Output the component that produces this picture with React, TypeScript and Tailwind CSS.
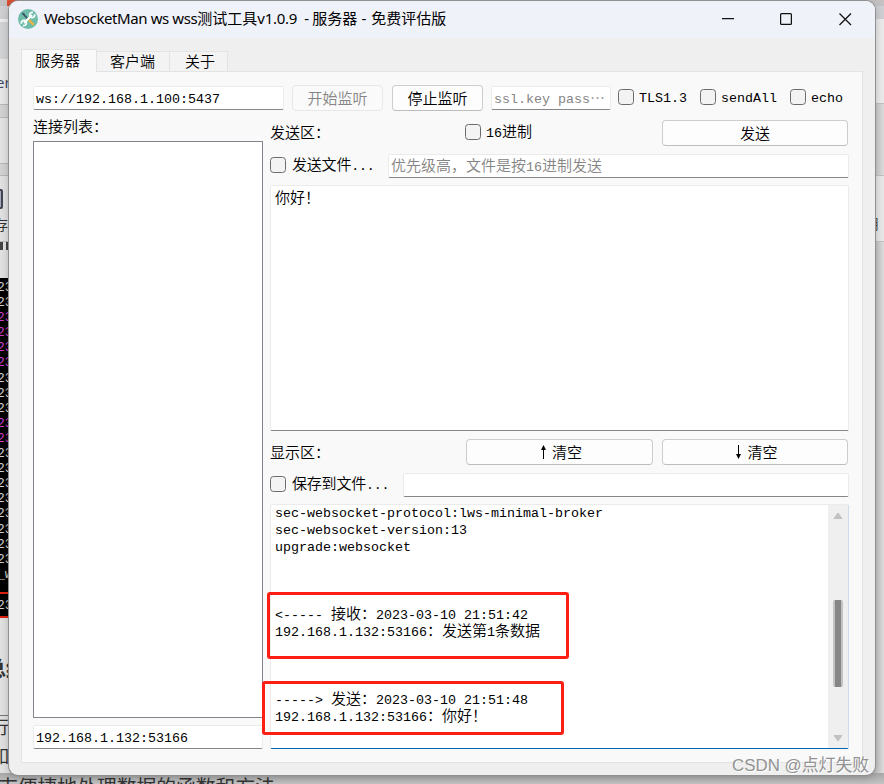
import React from "react";

const LATIN = /([\x20-\x7e]+)/;

function Mono({ text, className = "" }: { text: string; className?: string }) {
  return (
    <span className={`whitespace-pre font-['Noto_Sans_CJK_SC',sans-serif] text-[15px] font-[350] ${className}`}>
      {text.split(LATIN).map((part, i) =>
        LATIN.test(part) ? (
          <span key={i} className="font-['Liberation_Mono',monospace] text-[13.34px]">{part}</span>
        ) : (
          part
        ),
      )}
    </span>
  );
}

function Check({ label, className = "" }: { label: string; className?: string }) {
  return (
    <label className={`flex h-4 items-center gap-[5px] ${className}`}>
      <span className="size-4 shrink-0 rounded-[3.5px] border border-[#6b6b6b] bg-[#f3f3f3]" />
      <Mono text={label} className="leading-4" />
    </label>
  );
}

function Field({ text = "", className = "", muted = false, clipped = false }: { text?: string; className?: string; muted?: boolean; clipped?: boolean }) {
  return (
    <div
      className={`flex h-6 items-center overflow-hidden rounded-[2px] border border-[#ebebeb] border-b-[#868686] bg-white pl-[2px] pt-[1px] ${muted ? "text-[#858585]" : "text-black"} ${className}`}
    >
      <Mono text={text} className="leading-5" />
      {clipped && <Mono text="…" className="-mt-px leading-5" />}
    </div>
  );
}

function Btn({ text, className = "", disabled = false }: { text: string; className?: string; disabled?: boolean }) {
  return (
    <button
      className={`flex h-[26px] shrink-0 items-center justify-center rounded-[4px] border ${disabled ? "border-[#e8e8e8] bg-[#fafafa] text-[#858585]" : "border-[#cdcdcd] border-b-[#bdbdbd] bg-[#fdfdfd] text-black"} ${className}`}
    >
      <Mono text={text} className="leading-5" />
    </button>
  );
}

function Arrow({ down = false }: { down?: boolean }) {
  return (
    <svg width="7" height="14" viewBox="0 0 7 14" className={down ? "rotate-180" : ""}>
      <path d="M3.5 14V2" stroke="#000" fill="none" />
      <path d="M3.5 0L6 5H1Z" fill="#000" />
    </svg>
  );
}

function ClearBtn({ down = false, className = "" }: { down?: boolean; className?: string }) {
  return (
    <button className={`flex h-[26px] items-center justify-center gap-[5px] rounded-[4px] border border-[#cdcdcd] border-b-[#bdbdbd] bg-[#fdfdfd] pl-[3px] ${className}`}>
      <Arrow down={down} />
      <Mono text="清空" className="leading-5" />
    </button>
  );
}

const log = [
  "sec-websocket-protocol:lws-minimal-broker",
  "sec-websocket-version:13",
  "upgrade:websocket",
  "",
  "",
  "",
  "<----- 接收：2023-03-10 21:51:42",
  "192.168.1.132:53166：发送第1条数据",
  "",
  "",
  "",
  "-----> 发送：2023-03-10 21:51:48",
  "192.168.1.132:53166：你好！",
];

const terminal = ["w", "w", "p", "p", "p", "p", "w", "w", "w", "p", "p", "w", "w", "w", "w", "w", "w", "w", "w"];

function Desktop() {
  return (
    <>
      <div className="absolute inset-y-0 left-0 flex w-[10px] flex-col overflow-hidden bg-[#e2e2e2] font-['Noto_Sans_CJK_SC',sans-serif] text-[#333]">
        <div className="h-[19px] shrink-0 bg-[#d0d0d2]" />
        <div className="h-[3px] shrink-0 bg-[#ededed]" />
        <div className="h-[37px] shrink-0 bg-[#d3d4d6]" />
        <div className="h-[45px] shrink-0 bg-[#e8e8e8] pt-[13px] font-['Open_Sans',sans-serif] text-[15px] leading-5">
          <span className="-ml-[4px] text-[#3b4660]">er</span>
        </div>
        <div className="h-[14px] shrink-0 border-y border-[#b9b9b9] bg-[#d3d3d3]" />
        <div className="h-[45px] shrink-0 bg-[#e4e4e4]" />
        <div className="h-[13px] shrink-0 border-y border-[#b9b9b9] bg-[#d3d3d3]" />
        <div className="h-[66px] shrink-0 border-b border-[#bbb] pt-[13px]">
          <div className="-ml-1 h-5 w-[7px] rounded-[2px] border-2 border-[#454559] bg-[#a9abb5]" />
          <div className="-ml-[6px] mt-[7px] w-[15px] text-[14px] leading-4">存</div>
        </div>
        <div className="flex h-[36px] shrink-0 gap-[3px]">
          <div className="h-2 w-[3px] bg-[#444]" />
          <div className="h-2 w-[4px] bg-[#444]" />
        </div>
        <div className="h-[340px] shrink-0 bg-black pt-[2px] font-['Liberation_Mono',monospace] text-[13px] leading-[15.1px] text-[#d4d4d4]">
          {terminal.map((tone, i) => (
            <div key={i} className={`-ml-[3px] ${tone === "p" ? "text-[#cc3fcf]" : "text-[#d4d4d4]"}`}>
              23
            </div>
          ))}
          <div className="-ml-[3px] leading-[15px]">_w</div>
        </div>
        <div className="h-[98px] shrink-0 border-b border-[#777] pt-[34px]">
          <div className="-ml-[15px] w-[48px] text-[21px] font-bold leading-[30px]">总结</div>
        </div>
        <div className="-ml-[9px] w-[40px] text-[18px] leading-[20px]">行</div>
        <div className="-ml-[9px] mt-[8px] w-[40px] text-[18px] leading-[22px]">如</div>
      </div>

      <div className="absolute left-0 top-[592px] h-[26px] w-[9px] overflow-hidden border-y-2 border-[#e0200f] bg-black pt-[4px] font-['Liberation_Mono',monospace] text-[13px] leading-[16px] text-[#d4d4d4]">
        <div className="-ml-[3px]">23</div>
      </div>

      <div className="absolute inset-y-0 right-0 flex w-[10px] flex-col overflow-hidden bg-[#dcdcdc]">
        <div className="h-[19px] shrink-0 bg-[#cfd0d4]" />
        <div className="h-[85px] shrink-0 border-b border-[#c2c2c2] bg-[#ebebeb]" />
        <div className="h-[71px] shrink-0 bg-gradient-to-r from-[#c8c8c8] to-[#dcdcdc]" />
        <div className="h-[67px] shrink-0 border-y border-[#c2c2c2] bg-[#e8e8e8] pt-[39px] font-['Noto_Sans_CJK_SC',sans-serif] text-[14px] leading-4 text-[#4c4540]">
          <div className="-ml-[9px] w-[14px]">用</div>
        </div>
        <div className="grow bg-gradient-to-r from-[#bfbfbf] to-[#dedede]" />
      </div>

      <div className="absolute left-0 top-0 flex h-[6px] w-full bg-[#c4c2c3]">
        <div className="ml-[7px] h-full w-5 bg-[#dd5134]" />
        <div className="ml-[121px] h-full w-5 bg-[#b94a36]" />
        <div className="ml-[122px] h-full w-5 bg-[#b94a36]" />
        <div className="ml-[122px] h-full w-5 bg-[#b94a36]" />
        <div className="ml-[352px] h-full w-[9px] bg-[#555]" />
      </div>

      <div className="absolute inset-x-0 bottom-0 h-[11px] overflow-hidden bg-gradient-to-b from-[#a8a8a8] to-[#c3c3c3]">
        <div className="-ml-[2px] mt-[1px] whitespace-nowrap font-['Noto_Sans_CJK_SC',sans-serif] text-[19.8px] leading-[24px] text-[#333]">
          志便捷地处理数据的函数和方法
        </div>
      </div>
    </>
  );
}

function TitleBar() {
  return (
    <header className="flex h-[37px] shrink-0 items-center bg-[#f0f2f9] pl-[9px] text-black">
      <svg width="20" height="20" viewBox="0 0 20 20" className="-mt-px shrink-0">
        <circle cx="10" cy="10" r="10" fill="#6fbcaa" />
        <path d="M6 6L10 10" stroke="#34495e" strokeWidth="1.6" />
        <path d="M11.5 11.5L15 15.3" stroke="#f0b541" strokeWidth="2.4" strokeLinecap="round" />
        <path d="M3.6 4.6L4.8 3.4L7 5.2L7.2 6.6L5.8 6.6Z" fill="#34495e" />
        <path d="M6 14L14 6" stroke="#fff" strokeWidth="2.2" />
        <path d="M14.9 3.6A2.6 2.6 0 1 0 16.6 5.3" fill="none" stroke="#fff" strokeWidth="1.7" />
        <path d="M5.1 16.4A2.6 2.6 0 1 0 3.4 14.7" fill="none" stroke="#fff" strokeWidth="1.7" />
      </svg>
      <h1 className="-mt-[3px] ml-[6px] whitespace-pre font-['Noto_Sans','Noto_Sans_CJK_SC',sans-serif] text-[15px] font-normal leading-5">
        <span className="tracking-[-0.4px]">WebsocketMan ws wss</span>测试工具<span className="tracking-[-0.3px]">v1.0.9  - </span>服务器<span className="tracking-[0.4px]"> - </span>免费评估版
      </h1>
      <div className="ml-auto flex items-center">
        <svg width="130" height="14" viewBox="0 0 130 14" fill="none" stroke="#111" strokeWidth="1.25" className="-mt-px mr-[23px]">
          <path d="M0 6.5H12" />
          <rect x="58.6" y="1.6" width="10.8" height="10.8" rx="1" />
          <path d="M117.5 1.5L129 13M129 1.5L117.5 13" />
        </svg>
      </div>
    </header>
  );
}

function Connections() {
  return (
    <section className="flex w-[230px] shrink-0 flex-col">
      <div className="mt-[6px] h-[24px]">
        <Mono text="连接列表：" className="block leading-[17px]" />
      </div>
      <div className="h-[577px] border border-[#82858b] bg-white" />
      <Field text="192.168.1.132:53166" className="mt-[7px]" />
    </section>
  );
}

function Transfer() {
  return (
    <section className="ml-[7px] flex w-[579px] shrink-0 flex-col pt-[9px]">
      <div className="flex h-[26px] items-center">
        <Mono text="发送区：" className="-mt-[2px] w-[195px] leading-5" />
        <Check label="16进制" className="-mt-[2px] w-[197px]" />
        <Btn text="发送" className="w-[186px]" />
      </div>
      <div className="mt-[8px] flex h-6 items-center">
        <Check label="发送文件..." className="-mt-[2px] w-[118px] gap-[6px] tracking-[-0.2px]" />
        <Field text="优先级高，文件是按16进制发送" muted className="grow" />
      </div>
      <div className="mt-[7px] h-[246px] rounded-[2px] border border-[#ebebeb] border-b-[#868686] bg-white pl-[4px] pt-[2px]">
        <Mono text="你好！" className="block leading-[18px]" />
      </div>
      <div className="mt-[8px] flex h-[26px] items-center">
        <Mono text="显示区：" className="w-[196px] leading-5" />
        <ClearBtn className="w-[187px]" />
        <ClearBtn down className="ml-[9px] w-[186px]" />
      </div>
      <div className="mt-[8px] flex h-6 items-center">
        <Check label="保存到文件..." className="-mt-[2px] w-[133px] gap-[6px] tracking-[-0.2px]" />
        <Field className="grow" />
      </div>
      <div className="relative mt-[7px] flex h-[245px] justify-between rounded-[2px] border border-[#ebebeb] border-b-[#0067b8] border-r-[#ccdcec] bg-white">
        <div className="-mt-[3px] pl-[4px]">
          {log.map((line, i) => (
            <div key={i} className="h-[17px]">
              <Mono text={line} className="block leading-[17px]" />
            </div>
          ))}
        </div>
        <div className="flex w-5 flex-col items-center bg-[#efefef] pt-[7px]">
          <svg width="10" height="8" viewBox="0 0 10 8"><path d="M5 1L9 6.5H1Z" fill="#c2c2c2" stroke="#c2c2c2" strokeLinejoin="round" /></svg>
          <div className="mt-[80px] h-[87px] w-[10px] rounded-[2px] border-x-2 border-[#c2c2c2] bg-[#858585]" />
          <svg width="10" height="8" viewBox="0 0 10 8" className="mt-[47px]"><path d="M5 7L9 1.5H1Z" fill="#c2c2c2" stroke="#c2c2c2" strokeLinejoin="round" /></svg>
        </div>
        <div className="absolute left-[-4px] top-[87px] h-[67px] w-[302px] rounded-[3px] border-[3px] border-[#ff1e14]" />
        <div className="absolute left-[-9px] top-[176px] h-[54px] w-[302px] rounded-[3px] border-[3px] border-[#ff1e14]" />
      </div>
    </section>
  );
}

export default function App() {
  return (
    <div className="relative h-[784px] w-[884px] overflow-hidden bg-[#dcdcdc] text-black">
      <Desktop />
      <main className="absolute left-[9px] top-px flex h-[774px] w-[866px] flex-col overflow-hidden rounded-[9px] bg-[#efefef] shadow-[0_0_0_1px_#909090,0_2px_10px_rgba(0,0,0,0.25)]">
        <TitleBar />
        <nav className="ml-[12px] mt-[11px] flex h-[22px] items-end">
          <div className="relative z-10 -mb-px h-[23px] w-[76px] self-end border border-b-0 border-[#e3e3e3] bg-[#f9f9f9] pl-[13px]">
            <Mono text="服务器" className="block leading-[19px]" />
          </div>
          <div className="flex h-5 w-[73px] items-center border-r border-t border-[#e3e3e3] bg-[#f3f3f3] pl-[13px]">
            <Mono text="客户端" className="-mt-[2px] leading-5" />
          </div>
          <div className="flex h-5 w-[58px] items-center border-r border-t border-[#e3e3e3] bg-[#f3f3f3] pl-[15px]">
            <Mono text="关于" className="-mt-[2px] leading-5" />
          </div>
        </nav>
        <div className="ml-[12px] h-[692px] w-[842px] border border-[#e3e3e3] bg-[#f9f9f9] pl-[11px] pt-[13px]">
          <div className="flex h-[26px] items-center">
            <Field text="ws://192.168.1.100:5437" className="w-[251px]" />
            <Btn text="开始监听" disabled className="ml-[8px] w-[91px]" />
            <Btn text="停止监听" className="ml-[9px] w-[91px]" />
            <Field text="ssl.key pass" clipped muted className="ml-[8px] w-[120px]" />
            <Check label="TLS1.3" className="-mt-[2px] ml-[7px] w-[82px]" />
            <Check label="sendAll" className="-mt-[2px] w-[90px]" />
            <Check label="echo" className="-mt-[2px]" />
          </div>
          <div className="flex">
            <Connections />
            <Transfer />
          </div>
        </div>
      </main>
      <div className="absolute left-[732px] top-[755px] whitespace-nowrap font-['Liberation_Sans','Noto_Sans_CJK_SC',sans-serif] text-[16.9px] leading-[22px] text-[#929292] [text-shadow:1px_1px_0_#fff]">
        CSDN @点灯失败
      </div>
    </div>
  );
}
